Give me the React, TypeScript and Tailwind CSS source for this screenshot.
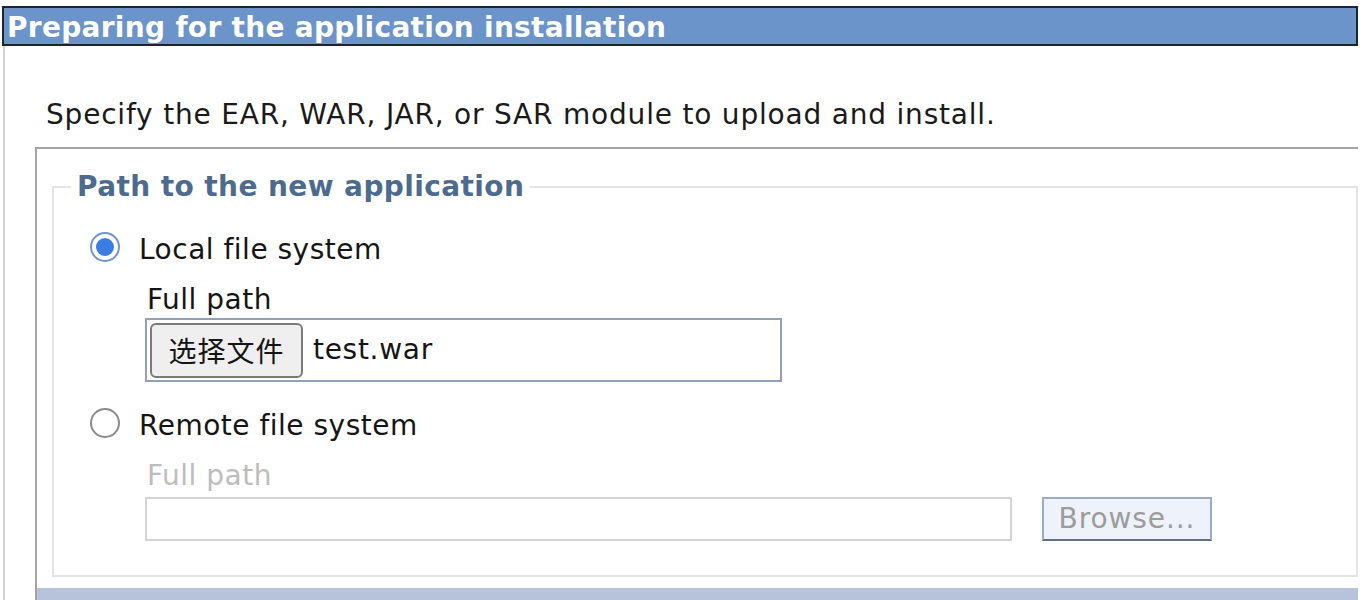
import React from "react";

function Radio({ checked }: { checked: boolean }) {
  if (checked) {
    return (
      <span className="flex h-[30px] w-[30px] shrink-0 items-center justify-center rounded-full border-[2px] border-[#6f93cc] bg-white">
        <span className="block h-[18px] w-[18px] rounded-full bg-[#3b7de3]" />
      </span>
    );
  }
  return <span className="block h-[30px] w-[30px] shrink-0 rounded-full border-[2px] border-[#8a8a8a] bg-white" />;
}

export default function App() {
  return (
    <div
      className="relative h-[600px] w-[1366px] overflow-hidden bg-white text-[#151515]"
      style={{ fontFamily: '"DejaVu Sans", Verdana, "Noto Sans CJK SC", sans-serif' }}
    >
      <div className="ml-[2px] w-[1356px] overflow-hidden pt-[6px]">
        <div className="h-[40px] border-[2px] border-[#1b2430] bg-[#6b94ca] pl-[3px] text-[28px] font-bold leading-[39px] tracking-[0.3px] text-white">
          Preparing for the application installation
        </div>
        <div className="ml-[1px] border-l-[2px] border-[#d2d2d2]">
          <div className="h-[101px] pl-[41px] pt-[53px] text-[28px] leading-[32px] tracking-[0.8px] text-[#1a1a1a]">
            Specify the EAR, WAR, JAR, or SAR module to upload and install.
          </div>
          <div className="ml-[30px] border-l-[2px] border-t-[2px] border-[#a4a4a4] pt-[22px]">
            <fieldset className="ml-[15px] border-[2px] border-[#e4e4e4] pb-[34px]">
              <legend className="ml-[17px] px-[6px] text-[28px] font-bold leading-[32px] tracking-[0.4px] text-[#4d6a8f]">
                Path to the new application
              </legend>
              <div className="ml-[36px] mt-[28px] flex h-[32px] items-center gap-[19px] text-[28px] tracking-[0.5px]">
                <Radio checked={true} />
                <span className="pt-[5px] leading-[32px]">Local file system</span>
              </div>
              <div className="ml-[93px] mt-[22px] h-[30px] text-[28px] leading-[30px] tracking-[0.5px]">Full path</div>
              <div className="ml-[91px] mt-[3px] flex h-[64px] w-[637px] items-center border-[2px] border-[#8fa2ba] pl-[3px]">
                <div
                  className="flex h-[55px] w-[153px] items-center justify-center rounded-[6px] border-[2px] border-[#7a7a7a] bg-[#efefef] text-[28px] tracking-[1px]"
                  style={{ fontFamily: '"Noto Sans CJK SC", sans-serif' }}
                >
                  选择文件
                </div>
                <span className="ml-[10px] text-[28px] tracking-[0.7px]">test.war</span>
              </div>
              <div className="ml-[36px] mt-[25px] flex h-[32px] items-center gap-[19px] text-[28px] tracking-[0.5px]">
                <Radio checked={false} />
                <span className="pt-[5px] leading-[32px]">Remote file system</span>
              </div>
              <div className="ml-[93px] mt-[22px] h-[30px] text-[28px] leading-[30px] tracking-[0.5px] text-[#bdbdbd]">Full path</div>
              <div className="ml-[91px] mt-[6px] flex items-center gap-[30px]">
                <div className="h-[44px] w-[867px] border-[2px] border-[#d4d4d4] bg-white" />
                <div className="flex h-[44px] w-[170px] items-center justify-center border-[2px] border-[#9aabc2] border-b-[#5d6f86] bg-[#eef2fb] text-[28px] tracking-[0.9px] text-[#9c9c9c]">
                  Browse...
                </div>
              </div>
            </fieldset>
            <div className="mt-[11px] h-[20px] bg-[#b7c3da]" />
          </div>
        </div>
      </div>
    </div>
  );
}
